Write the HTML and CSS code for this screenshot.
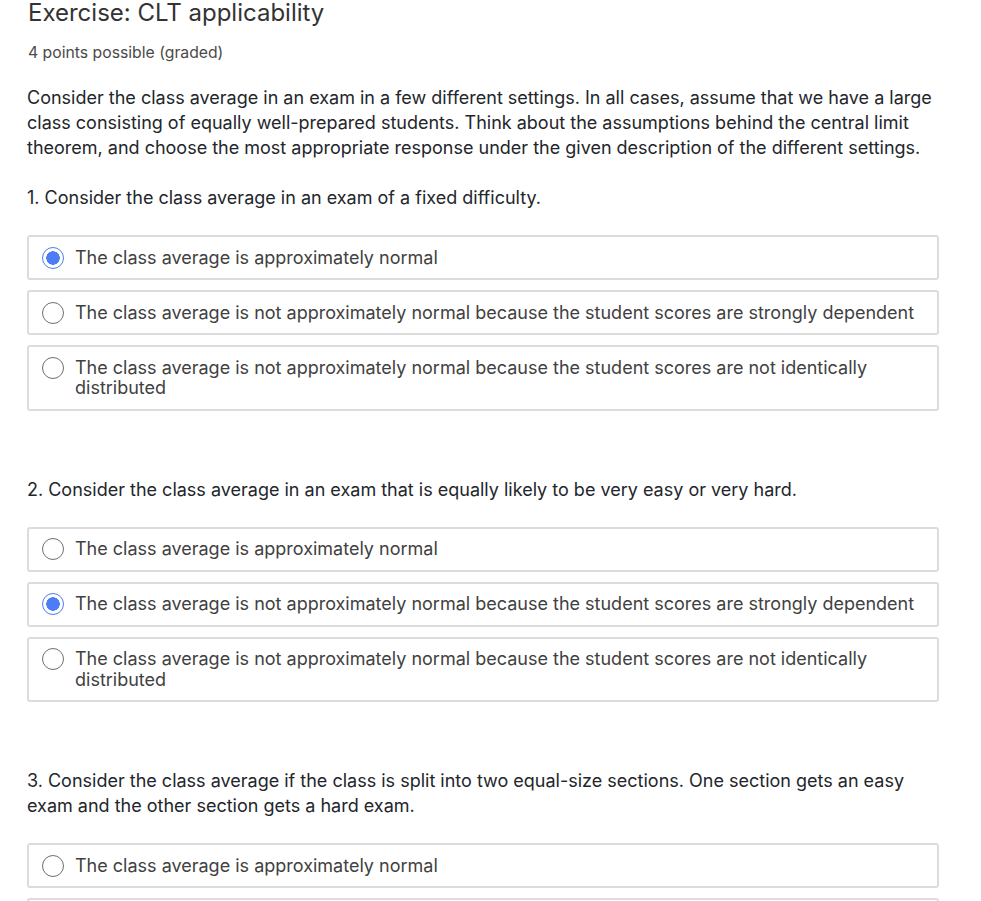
FILE: index.html
```html
<!DOCTYPE html>
<html lang="en">
<head>
<meta charset="utf-8">
<title>Exercise: CLT applicability</title>
<link rel="stylesheet" href="styles.css">
</head>
<body>
<main class="problem">
  <h2 class="title">Exercise: CLT applicability</h2>
  <div class="points">4 points possible (graded)</div>
  <p class="intro">Consider the class average in an exam in a few different settings. In all cases, assume that we have a large class consisting of equally well-prepared students. Think about the assumptions behind the central limit theorem, and choose the most appropriate response under the given description of the different settings.</p>

  <section class="question">
    <p class="prompt">1. Consider the class average in an exam of a fixed difficulty.</p>
    <div class="options">
      <label class="option"><span class="radio checked"></span><span class="label-text">The class average is approximately normal</span></label>
      <label class="option"><span class="radio"></span><span class="label-text">The class average is not approximately normal because the student scores are strongly dependent</span></label>
      <label class="option"><span class="radio"></span><span class="label-text">The class average is not approximately normal because the student scores are not identically distributed</span></label>
    </div>
  </section>

  <section class="question">
    <p class="prompt">2. Consider the class average in an exam that is equally likely to be very easy or very hard.</p>
    <div class="options">
      <label class="option"><span class="radio"></span><span class="label-text">The class average is approximately normal</span></label>
      <label class="option"><span class="radio checked"></span><span class="label-text">The class average is not approximately normal because the student scores are strongly dependent</span></label>
      <label class="option"><span class="radio"></span><span class="label-text">The class average is not approximately normal because the student scores are not identically distributed</span></label>
    </div>
  </section>

  <section class="question">
    <p class="prompt">3. Consider the class average if the class is split into two equal-size sections. One section gets an easy exam and the other section gets a hard exam.</p>
    <div class="options">
      <label class="option"><span class="radio"></span><span class="label-text">The class average is approximately normal</span></label>
      <label class="option"><span class="radio"></span><span class="label-text">The class average is not approximately normal because the student scores are strongly dependent</span></label>
      <label class="option"><span class="radio"></span><span class="label-text">The class average is not approximately normal because the student scores are not identically distributed</span></label>
    </div>
  </section>
</main>
</body>
</html>
```

FILE: styles.css
```css
html, body {
  margin: 0;
  padding: 0;
  background: #fff;
}

body {
  font-family: Inter, "Noto Sans", "Liberation Sans", sans-serif;
  color: #23262b;
}

.problem {
  width: 912px;
  padding: 0 0 40px 27px;
}

.title {
  margin: 0;
  font-size: 24px;
  line-height: 26px;
  font-weight: 400;
  color: #333;
  padding-left: 1px;
}

.points {
  margin-top: 17px;
  font-size: 15.75px;
  line-height: 20px;
  color: #4a4a4a;
  padding-left: 1px;
}

.intro {
  margin: 22px 0 0;
  font-size: 18px;
  line-height: 25px;
}

.question {
  margin-bottom: 66px;
}

.prompt {
  margin: 25px 0 0;
  font-size: 18px;
  line-height: 25px;
}

.options {
  margin-top: 25px;
  display: flex;
  flex-direction: column;
  gap: 10px;
}

.option {
  display: flex;
  align-items: flex-start;
  gap: 11px;
  border: 2px solid #dcdcdc;
  border-radius: 3px;
  padding: 10px 12px 10px 13px;
  font-size: 18px;
  line-height: 20.5px;
  color: #414141;
}

.label-text {
  padding-top: 0.5px;
}

.radio {
  flex: none;
  box-sizing: border-box;
  width: 22px;
  height: 22px;
  margin: -0.5px 0;
  border: 1px solid #6f6f6f;
  border-radius: 50%;
  background: #fff;
}

.radio.checked {
  border: 1.5px solid #4c7df7;
  background: radial-gradient(circle, #4c7df7 0 6.5px, #fff 7px);
}
```
